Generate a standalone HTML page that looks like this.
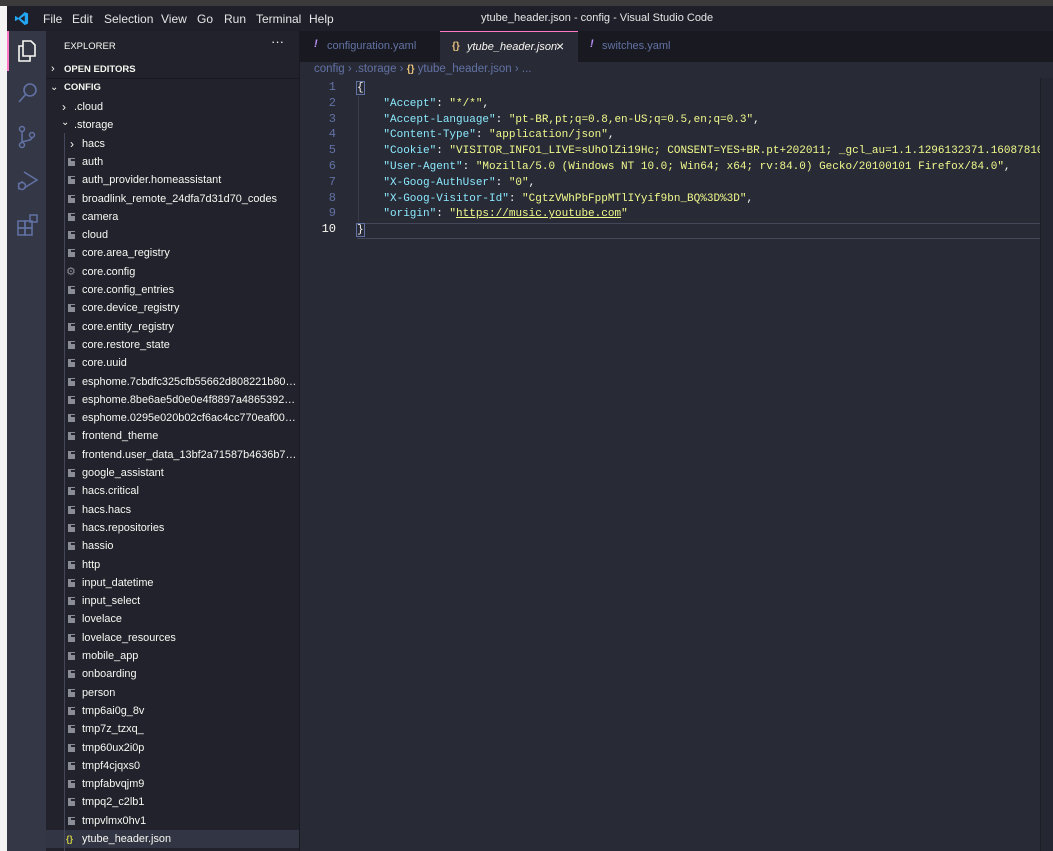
<!DOCTYPE html>
<html><head><meta charset="utf-8"><style>
*{margin:0;padding:0;box-sizing:border-box}
body{width:1053px;height:851px;overflow:hidden;background:#f0f0f0;font-family:"Liberation Sans",sans-serif;position:relative}
.top{position:absolute;left:0;top:0;width:1053px;height:6px;background:#3b3b3b}
.title{position:absolute;left:7px;top:6px;width:1046px;height:25px;background:#1e1f29;color:#e6e6e6;font-size:12px}
.title span{position:absolute;top:6px}
.act{position:absolute;left:7px;top:31px;width:39px;height:820px;background:#343746}
.side{position:absolute;left:46px;top:31px;width:254px;height:820px;background:#21222c;border-right:1px solid #191a21;color:#f8f8f2;font-size:10.9px}
.tabs{position:absolute;left:300px;top:31px;width:753px;height:31px;background:#191a21}
.tab{position:absolute;top:0;height:31px;font-size:11px;color:#6272a4;padding-top:9px}
.editor{position:absolute;left:300px;top:62px;width:753px;height:789px;background:#282a36}
.row{position:absolute;left:0;width:253px;height:18.3px;line-height:18.3px;white-space:nowrap;overflow:hidden}
.row .t{position:absolute;right:2px;overflow:hidden;text-overflow:ellipsis;white-space:nowrap}
.fi{position:absolute;left:22px;top:5px;width:7px;height:8px;background:#8b8d96}
.fi:after{content:"";position:absolute;left:3px;top:1px;width:4px;height:2px;background:#21222c}
.code{position:absolute;font-family:"Liberation Mono",monospace;font-size:11px;white-space:pre;line-height:15.8px}
.k{color:#8be9fd}.s{color:#f1fa8c}.p{color:#f8f8f2}
.ln{position:absolute;left:0;width:36px;text-align:right;font-family:"Liberation Mono",monospace;font-size:12px;color:#6272a4;line-height:15.8px}
</style></head><body>
<div class="top"></div>
<div style="position:absolute;left:0;top:6px;width:7px;height:845px;background:#f4f4f4"></div>
<div class="title">
<svg style="position:absolute;left:7px;top:5px" width="15" height="15" viewBox="0 0 16 16"><path d="M11.5 1 L15 2.7 V13.3 L11.5 15 L4.5 8.6 L1.8 10.7 L1 10.2 V5.8 L1.8 5.3 L4.5 7.4 Z M11.5 4.6 L7 8 L11.5 11.4 Z" fill="#23a7f2"/></svg>
<span style="left:36px">File</span><span style="left:65px">Edit</span><span style="left:97px">Selection</span><span style="left:154px">View</span><span style="left:190px">Go</span><span style="left:217px">Run</span><span style="left:249px">Terminal</span><span style="left:302px">Help</span>
<span style="left:474px;font-size:11px">ytube_header.json - config - Visual Studio Code</span>
</div>
<div class="act">
<div style="position:absolute;left:0;top:0;width:2px;height:40px;background:#ff79c6"></div>
<svg style="position:absolute;left:9px;top:8px" width="22" height="24" viewBox="0 0 22 24" fill="none" stroke="#f8f8f2" stroke-width="1.6"><path d="M7 2h8l4 4v11H7z"/><path d="M7 7H3v15h11v-5"/></svg>
<svg style="position:absolute;left:10px;top:50px" width="22" height="24" viewBox="0 0 22 24" fill="none" stroke="#6272a4" stroke-width="1.6"><circle cx="13" cy="9" r="6"/><path d="M9 13L2 21"/></svg>
<svg style="position:absolute;left:10px;top:94px" width="20" height="24" viewBox="0 0 20 24" fill="none" stroke="#6272a4" stroke-width="1.5"><circle cx="5" cy="4" r="2.5"/><circle cx="5" cy="20" r="2.5"/><circle cx="15" cy="10" r="2.5"/><path d="M5 6.5v11M15 12.5c0 4-10 3-10 5"/></svg>
<svg style="position:absolute;left:9px;top:138px" width="24" height="24" viewBox="0 0 24 24" fill="none" stroke="#6272a4" stroke-width="1.5"><path d="M8 3l13 8-13 8"/><circle cx="6" cy="17" r="3.5"/><path d="M2 14l2 1M2 20l2-1M6 13v-1"/></svg>
<svg style="position:absolute;left:9px;top:182px" width="24" height="24" viewBox="0 0 24 24" fill="none" stroke="#6272a4" stroke-width="1.5"><rect x="2" y="8" width="7" height="7"/><rect x="9" y="8" width="7" height="7"/><rect x="2" y="15" width="7" height="7"/><rect x="9" y="15" width="7" height="7"/><rect x="14" y="2" width="7" height="7"/></svg>
</div>
<div class="side">
<div style="position:absolute;left:18px;top:10px;font-size:9.5px">EXPLORER</div>
<div style="position:absolute;left:225px;top:3px;font-size:13px">···</div>
<div style="position:absolute;left:0;top:30px;width:253px;height:18px;border-bottom:1px solid #191a21;font-size:9.5px;font-weight:bold;line-height:17px;padding-left:18px"><span style="position:absolute;left:5px;font-weight:normal;font-size:11px">›</span>OPEN EDITORS</div>
<div style="position:absolute;left:0;top:48px;width:253px;height:18px;font-size:9.5px;font-weight:bold;line-height:18px;padding-left:18px"><span style="position:absolute;left:4px;font-weight:normal;font-size:10px">⌄</span>CONFIG</div>
<div style="position:absolute;left:18px;top:102px;width:1px;height:718px;background:#44475a"></div>
<div id="rows"></div>
</div>
<div class="tabs">
<div class="tab" style="left:0;width:140px;border-right:1px solid #191a21"><span style="color:#bd93f9;font-weight:bold;position:absolute;left:14px;top:7px;font-style:italic">!</span><span style="position:absolute;left:27px">configuration.yaml</span></div>
<div class="tab" style="left:140px;width:138px;background:#282a36;border-top:1px solid #ff79c6;color:#f8f8f2"><span style="color:#e5c07b;position:absolute;left:12px;font-size:10px;font-weight:bold">{}</span><span style="position:absolute;left:27px;font-style:italic">ytube_header.json</span><span style="position:absolute;left:116px;top:6px;font-size:14px">×</span></div>
<div class="tab" style="left:278px;width:112px;border-right:1px solid #191a21"><span style="color:#bd93f9;font-weight:bold;position:absolute;left:12px;top:7px;font-style:italic">!</span><span style="position:absolute;left:24px">switches.yaml</span></div>
</div>
<div class="editor">
<div style="position:absolute;left:14px;top:1px;font-size:11.5px;color:#6272a4">config › .storage › <span style="color:#e5c07b;font-weight:bold;font-size:10px">{}</span> ytube_header.json › ...</div>
<div class="ln" style="top:18px">1<br>2<br>3<br>4<br>5<br>6<br>7<br>8<br>9<br><span style="color:#f8f8f2">10</span></div>
<div style="position:absolute;left:57px;top:161px;width:683px;height:16px;border-top:1px solid #44475a;border-bottom:1px solid #44475a"></div>
<div style="position:absolute;left:58px;top:34px;width:1px;height:126px;background:#3a3d4c"></div>
<div class="code" style="left:57px;top:19px"><span class="p" style="outline:1px solid #6272a4">{</span>
<span class="k">    "Accept"</span><span class="p">: </span><span class="s">"*/*"</span><span class="p">,</span>
<span class="k">    "Accept-Language"</span><span class="p">: </span><span class="s">"pt-BR,pt;q=0.8,en-US;q=0.5,en;q=0.3"</span><span class="p">,</span>
<span class="k">    "Content-Type"</span><span class="p">: </span><span class="s">"application/json"</span><span class="p">,</span>
<span class="k">    "Cookie"</span><span class="p">: </span><span class="s">"VISITOR_INFO1_LIVE=sUhOlZi19Hc; CONSENT=YES+BR.pt+202011; _gcl_au=1.1.1296132371.1608781076;</span>
<span class="k">    "User-Agent"</span><span class="p">: </span><span class="s">"Mozilla/5.0 (Windows NT 10.0; Win64; x64; rv:84.0) Gecko/20100101 Firefox/84.0"</span><span class="p">,</span>
<span class="k">    "X-Goog-AuthUser"</span><span class="p">: </span><span class="s">"0"</span><span class="p">,</span>
<span class="k">    "X-Goog-Visitor-Id"</span><span class="p">: </span><span class="s">"CgtzVWhPbFppMTlIYyif9bn_BQ%3D%3D"</span><span class="p">,</span>
<span class="k">    "origin"</span><span class="p">: </span><span class="s">"<span style="text-decoration:underline">https://music.youtube.com</span>"</span>
<span class="p" style="outline:1px solid #6272a4">}</span></div>
<div style="position:absolute;left:740px;top:16px;width:13px;height:773px;background:#242631;border-left:1px solid #1d1e26"></div>
</div>
<script>
var items=[[".cloud","c",1],[".storage","o",1],["hacs","c",2],["auth","f"],["auth_provider.homeassistant","f"],["broadlink_remote_24dfa7d31d70_codes","f"],["camera","f"],["cloud","f"],["core.area_registry","f"],["core.config","g"],["core.config_entries","f"],["core.device_registry","f"],["core.entity_registry","f"],["core.restore_state","f"],["core.uuid","f"],["esphome.7cbdfc325cfb55662d808221b80d808221b80d","f"],["esphome.8be6ae5d0e0e4f8897a4865392af4865392af","f"],["esphome.0295e020b02cf6ac4cc770eaf0041eaf0041","f"],["frontend_theme","f"],["frontend.user_data_13bf2a71587b4636b71c4636b71c","f"],["google_assistant","f"],["hacs.critical","f"],["hacs.hacs","f"],["hacs.repositories","f"],["hassio","f"],["http","f"],["input_datetime","f"],["input_select","f"],["lovelace","f"],["lovelace_resources","f"],["mobile_app","f"],["onboarding","f"],["person","f"],["tmp6ai0g_8v","f"],["tmp7z_tzxq_","f"],["tmp60ux2i0p","f"],["tmpf4cjqxs0","f"],["tmpfabvqjm9","f"],["tmpq2_c2lb1","f"],["tmpvlmx0hv1","f"],["ytube_header.json","j"]];
var h="";
items.forEach(function(it,i){
var top=67+i*18.3, t=it[1], sel=(t=="j");
var ic="";
if(t=="c") ic='<span style="position:absolute;left:'+(it[2]==1?16:24)+'px;font-size:12px">›</span>';
else if(t=="o") ic='<span style="position:absolute;left:15px;font-size:10px;top:-2px">⌄</span>';
else if(t=="f") ic='<div class="fi"></div>';
else if(t=="g") ic='<span style="position:absolute;left:20px;color:#8b8d96;font-size:11px">⚙</span>';
else ic='<span style="position:absolute;left:20px;color:#cbcb41;font-size:9px;font-weight:bold;top:0">{}</span>';
var x=(t=="c"&&it[2]==1)||t=="o"?28:36;
h+='<div class="row" style="top:'+top+'px;'+(sel?'background:#44475a80;':'')+'">'+ic+'<span class="t" style="left:'+x+'px">'+it[0]+'</span></div>';
});
document.getElementById("rows").innerHTML=h;
</script>
</body></html>
